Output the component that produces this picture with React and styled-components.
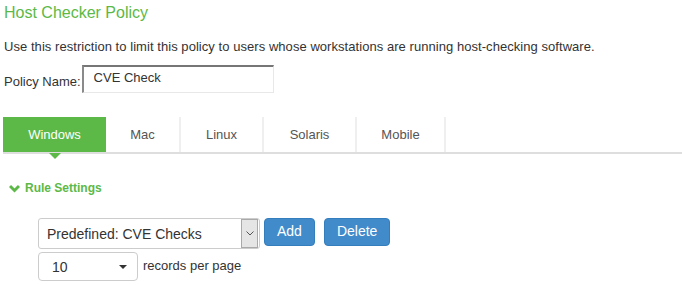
import React from "react";
import styled, { createGlobalStyle } from "styled-components";

const Global = createGlobalStyle`
  html, body { margin: 0; padding: 0; background: #fff; }
  body { font-family: "Liberation Sans", Arial, sans-serif; color: #333; }
`;

const Page = styled.div`
  width: 682px;
  height: 285px;
  overflow: hidden;
  padding: 4px 0 0 0;
  box-sizing: border-box;
`;

const Title = styled.h1`
  margin: 0 0 0 4px;
  font-size: 16px;
  font-weight: normal;
  color: #5cb947;
  line-height: 18px;
`;

const Desc = styled.p`
  margin: 17px 0 0 4px;
  font-size: 13px;
  line-height: 16px;
  color: #333;
  letter-spacing: 0.004em;
`;

const NameRow = styled.div`
  display: flex;
  align-items: flex-end;
  margin: 10px 0 0 4px;
`;

const Label = styled.label`
  font-size: 13px;
  line-height: 16px;
  margin-bottom: 3px;
`;

const TextInput = styled.input`
  width: 192px;
  height: 28px;
  box-sizing: border-box;
  margin-left: 1px;
  padding: 0 0 5px 10px;
  font-family: "Liberation Sans", Arial, sans-serif;
  font-size: 13px;
  color: #333;
  border-style: solid;
  border-width: 2px 1px 1px 2px;
  border-color: #767676 #e8e8e8 #e8e8e8 #8a8a8a;
  outline: none;
`;

const Tabs = styled.div`
  display: flex;
  margin: 24px 0 0 3px;
  border-bottom: 2px solid #dedede;
  height: 35px;
  box-sizing: content-box;
`;

const Tab = styled.div`
  position: relative;
  width: ${(p) => p.$w}px;
  height: 35px;
  box-sizing: border-box;
  display: flex;
  align-items: center;
  justify-content: center;
  font-size: 13px;
  color: ${(p) => (p.$active ? "#fff" : "#555")};
  background: ${(p) => (p.$active ? "#5cb947" : "#fff")};
  border-right: ${(p) => (p.$active ? "none" : "2px solid #efefef")};
  padding-bottom: 1px;
  ${(p) =>
    p.$active &&
    `
    &::after {
      content: "";
      position: absolute;
      left: 50%;
      bottom: -7px;
      margin-left: -6px;
      border-left: 6px solid transparent;
      border-right: 6px solid transparent;
      border-top: 6px solid #5cb947;
    }
  `}
`;

const Section = styled.div`
  display: flex;
  align-items: center;
  gap: 5px;
  margin: 27px 0 0 9px;
  font-size: 12px;
  font-weight: bold;
  color: #5cb947;
`;

const Controls = styled.div`
  margin: 23px 0 0 38px;
  display: flex;
  flex-direction: column;
  gap: 3px;
`;

const Row = styled.div`
  display: flex;
  align-items: flex-start;
`;

const SelectBox = styled.div`
  width: 222px;
  height: 31px;
  box-sizing: border-box;
  border: 1px solid #ccc;
  border-radius: 3px;
  display: flex;
  align-items: center;
  padding-left: 8px;
  font-size: 14px;
  color: #333;
`;

const SelectText = styled.span`
  flex: 1;
`;

const ArrowBox = styled.div`
  width: 17px;
  height: 29px;
  margin-right: 1px;
  box-sizing: border-box;
  border: 1px solid #a9a9a9;
  background: #e5e5e5;
  display: flex;
  align-items: center;
  justify-content: center;
`;

const Button = styled.button`
  height: 28px;
  box-sizing: border-box;
  padding: 0 ${(p) => p.$px}px 2px;
  margin-left: ${(p) => p.$ml}px;
  background: #428bca;
  border: 1px solid #357ebd;
  border-radius: 4px;
  color: #fff;
  font-family: "Liberation Sans", Arial, sans-serif;
  font-size: 14px;
`;

const PageSize = styled.div`
  width: 100px;
  height: 29px;
  box-sizing: border-box;
  border: 1px solid #ccc;
  border-radius: 4px;
  display: flex;
  align-items: center;
  justify-content: space-between;
  padding: 0 10px 0 13px;
  font-size: 14px;
  color: #333;
`;

const Caret = styled.span`
  width: 0;
  height: 0;
  border-left: 4px solid transparent;
  border-right: 4px solid transparent;
  border-top: 4px solid #333;
`;

const RecordsLabel = styled.span`
  font-size: 13px;
  margin-left: 5px;
  margin-top: 6px;
  color: #333;
`;

const tabs = [
  { name: "Windows", w: 103, active: true },
  { name: "Mac", w: 75 },
  { name: "Linux", w: 83 },
  { name: "Solaris", w: 93 },
  { name: "Mobile", w: 89 },
];

export default function App() {
  return (
    <Page>
      <Global />
      <Title>Host Checker Policy</Title>
      <Desc>
        Use this restriction to limit this policy to users whose workstations are running host-checking software.
      </Desc>
      <NameRow>
        <Label>Policy Name:</Label>
        <TextInput defaultValue="CVE Check" />
      </NameRow>
      <Tabs>
        {tabs.map((t) => (
          <Tab key={t.name} $w={t.w} $active={t.active}>
            {t.name}
          </Tab>
        ))}
      </Tabs>
      <Section>
        <svg width="11" height="9" viewBox="0 0 11 9">
          <path d="M1 2 L5.5 6.5 L10 2" fill="none" stroke="#5cb947" strokeWidth="3" />
        </svg>
        Rule Settings
      </Section>
      <Controls>
        <Row>
          <SelectBox>
            <SelectText>Predefined: CVE Checks</SelectText>
            <ArrowBox>
              <svg width="8" height="5" viewBox="0 0 8 5">
                <path d="M0.5 0.5 L4 4 L7.5 0.5" fill="none" stroke="#555" strokeWidth="1" />
              </svg>
            </ArrowBox>
          </SelectBox>
          <Button $px={12} $ml={4}>Add</Button>
          <Button $px={12} $ml={9}>Delete</Button>
        </Row>
        <Row>
          <PageSize>
            <span>10</span>
            <Caret />
          </PageSize>
          <RecordsLabel>records per page</RecordsLabel>
        </Row>
      </Controls>
    </Page>
  );
}
